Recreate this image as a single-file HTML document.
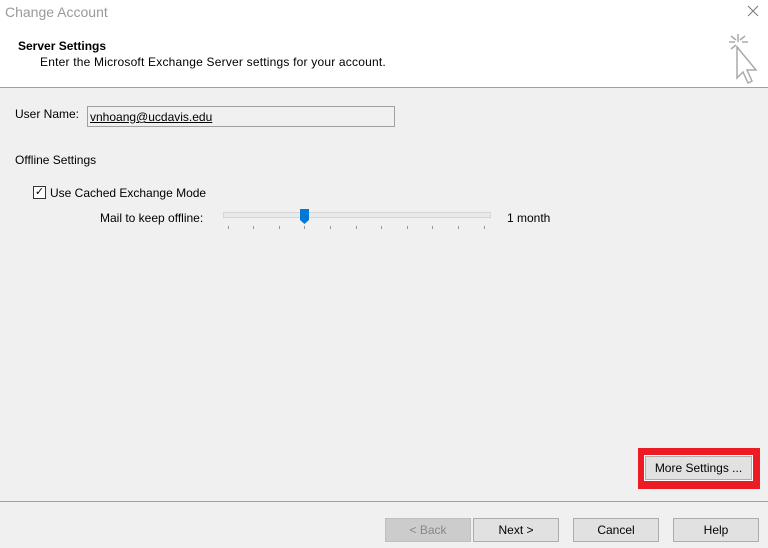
<!DOCTYPE html>
<html><head><style>
body{margin:0;width:768px;height:548px;background:#f0f0f0;font-family:"Liberation Sans",Arial,sans-serif;font-size:12px;color:#000;position:relative;overflow:hidden}
.a{position:absolute;white-space:nowrap}
.btn{position:absolute;background:#e1e1e1;border:1px solid #adadad;text-align:center;line-height:22px;font-size:12px;box-sizing:border-box;height:24px}
.tick{position:absolute;top:226px;width:1px;height:3px;background:#999}
</style></head><body>
<div class="a" style="left:0;top:0;width:768px;height:87px;background:#fff"></div>
<div class="a" style="left:0;top:87px;width:768px;height:1px;background:#a0a0a0"></div>
<div class="a" style="left:5px;top:4px;font-size:14px;color:#999">Change Account</div>
<svg class="a" style="left:747px;top:5px" width="12" height="12"><path d="M1 1l10 10M11 1L1 11" stroke="#777" stroke-width="1"/></svg>
<svg class="a" style="left:724px;top:33px" width="40" height="52" viewBox="0 0 40 52" fill="none" stroke="#aaa" stroke-width="1.5">
<path d="M14 1v8M14 14v3M5 9h6M18 9h6M7 3l5 4M21 3l-5 4M7 16l5-4"/>
<path d="M13 14v31l6-6 5 11 4-2-5-11h9z" fill="#fff"/>
</svg>
<div class="a" style="left:18px;top:39px;font-weight:bold">Server Settings</div>
<div class="a" style="left:40px;top:55px;letter-spacing:0.2px">Enter the Microsoft Exchange Server settings for your account.</div>
<div class="a" style="left:15px;top:107px">User Name:</div>
<div class="a" style="left:87px;top:106px;width:308px;height:21px;box-sizing:border-box;border:1px solid #a0a0a0;background:#f0f0f0"></div>
<div class="a" style="left:90px;top:110px;text-decoration:underline">vnhoang@ucdavis.edu</div>
<div class="a" style="left:15px;top:153px">Offline Settings</div>
<div class="a" style="left:33px;top:186px;width:13px;height:13px;box-sizing:border-box;border:1px solid #333;background:#fff;font-size:11px;line-height:11px;text-align:center">✓</div>
<div class="a" style="left:50px;top:186px">Use Cached Exchange Mode</div>
<div class="a" style="left:100px;top:211px">Mail to keep offline:</div>
<div class="a" style="left:223px;top:212px;width:266px;height:4px;background:#e7eaea;border:1px solid #d6d6d6"></div>
<svg class="a" style="left:300px;top:209px" width="9" height="15"><path d="M0 0h9v11l-4.5 4L0 11z" fill="#0078d7"/></svg>
<div class="tick" style="left:228px"></div><div class="tick" style="left:253px"></div><div class="tick" style="left:279px"></div><div class="tick" style="left:304px"></div><div class="tick" style="left:330px"></div><div class="tick" style="left:356px"></div><div class="tick" style="left:381px"></div><div class="tick" style="left:407px"></div><div class="tick" style="left:432px"></div><div class="tick" style="left:458px"></div><div class="tick" style="left:484px"></div>
<div class="a" style="left:507px;top:211px">1 month</div>
<div class="a" style="left:638px;top:448px;width:122px;height:41px;background:#ed1c24"></div>
<div class="btn" style="left:645px;top:456px;width:107px;outline:1px solid #fff">More Settings ...</div>
<div class="a" style="left:0;top:501px;width:768px;height:1px;background:#a0a0a0"></div>
<div class="btn" style="left:385px;top:518px;width:86px;background:#ccc;border-color:#bfbfbf;color:#888">&lt; Back</div>
<div class="btn" style="left:473px;top:518px;width:86px">Next &gt;</div>
<div class="btn" style="left:573px;top:518px;width:86px">Cancel</div>
<div class="btn" style="left:673px;top:518px;width:86px">Help</div>
</body></html>
